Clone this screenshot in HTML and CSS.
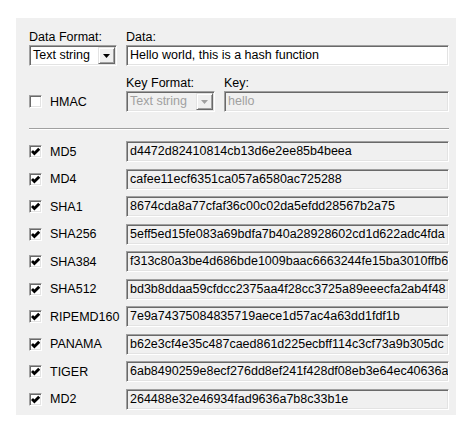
FILE: index.html
```html
<!DOCTYPE html>
<html>
<head>
<meta charset="utf-8">
<link rel="stylesheet" href="styles.css">
</head>
<body>
<div class="panel">
  <div class="top">
    <div class="col-fmt">
      <div class="lbl">Data Format:</div>
      <div class="combo">
        <span class="combo-text">Text string</span>
        <span class="combo-btn"><svg width="7" height="4" viewBox="0 0 7 4"><polygon points="0,0 7,0 3.5,4" fill="#000"/></svg></span>
      </div>
    </div>
    <div class="col-data">
      <div class="lbl">Data:</div>
      <div class="field white">Hello world, this is a hash function</div>
    </div>
  </div>
  <div class="keyrow">
    <div class="hmac"><span class="cb"></span><span class="cb-label">HMAC</span></div>
    <div class="col-kfmt">
      <div class="lbl">Key Format:</div>
      <div class="combo disabled">
        <span class="combo-text">Text string</span>
        <span class="combo-btn"><svg width="7" height="4" viewBox="0 0 7 4"><polygon points="0,0 7,0 3.5,4" fill="#a0a0a0"/></svg></span>
      </div>
    </div>
    <div class="col-key">
      <div class="lbl">Key:</div>
      <div class="field disabled">hello</div>
    </div>
  </div>
  <div class="sep"></div>
  <div class="hashes">
    <div class="hrow"><div class="hlabel"><span class="cb on"><svg width="9" height="9" viewBox="0 0 9 9"><polyline points="1,4 3.4,6.6 8.2,1.8" fill="none" stroke="#000" stroke-width="2.8"/></svg></span><span class="cb-label">MD5</span></div><div class="field ro">d4472d82410814cb13d6e2ee85b4beea</div></div>
    <div class="hrow"><div class="hlabel"><span class="cb on"><svg width="9" height="9" viewBox="0 0 9 9"><polyline points="1,4 3.4,6.6 8.2,1.8" fill="none" stroke="#000" stroke-width="2.8"/></svg></span><span class="cb-label">MD4</span></div><div class="field ro">cafee11ecf6351ca057a6580ac725288</div></div>
    <div class="hrow"><div class="hlabel"><span class="cb on"><svg width="9" height="9" viewBox="0 0 9 9"><polyline points="1,4 3.4,6.6 8.2,1.8" fill="none" stroke="#000" stroke-width="2.8"/></svg></span><span class="cb-label">SHA1</span></div><div class="field ro">8674cda8a77cfaf36c00c02da5efdd28567b2a75</div></div>
    <div class="hrow"><div class="hlabel"><span class="cb on"><svg width="9" height="9" viewBox="0 0 9 9"><polyline points="1,4 3.4,6.6 8.2,1.8" fill="none" stroke="#000" stroke-width="2.8"/></svg></span><span class="cb-label">SHA256</span></div><div class="field ro">5eff5ed15fe083a69bdfa7b40a28928602cd1d622adc4fda</div></div>
    <div class="hrow"><div class="hlabel"><span class="cb on"><svg width="9" height="9" viewBox="0 0 9 9"><polyline points="1,4 3.4,6.6 8.2,1.8" fill="none" stroke="#000" stroke-width="2.8"/></svg></span><span class="cb-label">SHA384</span></div><div class="field ro">f313c80a3be4d686bde1009baac6663244fe15ba3010ffb6</div></div>
    <div class="hrow"><div class="hlabel"><span class="cb on"><svg width="9" height="9" viewBox="0 0 9 9"><polyline points="1,4 3.4,6.6 8.2,1.8" fill="none" stroke="#000" stroke-width="2.8"/></svg></span><span class="cb-label">SHA512</span></div><div class="field ro">bd3b8ddaa59cfdcc2375aa4f28cc3725a89eeecfa2ab4f48</div></div>
    <div class="hrow"><div class="hlabel"><span class="cb on"><svg width="9" height="9" viewBox="0 0 9 9"><polyline points="1,4 3.4,6.6 8.2,1.8" fill="none" stroke="#000" stroke-width="2.8"/></svg></span><span class="cb-label">RIPEMD160</span></div><div class="field ro">7e9a74375084835719aece1d57ac4a63dd1fdf1b</div></div>
    <div class="hrow"><div class="hlabel"><span class="cb on"><svg width="9" height="9" viewBox="0 0 9 9"><polyline points="1,4 3.4,6.6 8.2,1.8" fill="none" stroke="#000" stroke-width="2.8"/></svg></span><span class="cb-label">PANAMA</span></div><div class="field ro">b62e3cf4e35c487caed861d225ecbff114c3cf73a9b305dc</div></div>
    <div class="hrow"><div class="hlabel"><span class="cb on"><svg width="9" height="9" viewBox="0 0 9 9"><polyline points="1,4 3.4,6.6 8.2,1.8" fill="none" stroke="#000" stroke-width="2.8"/></svg></span><span class="cb-label">TIGER</span></div><div class="field ro">6ab8490259e8ecf276dd8ef241f428df08eb3e64ec40636a</div></div>
    <div class="hrow"><div class="hlabel"><span class="cb on"><svg width="9" height="9" viewBox="0 0 9 9"><polyline points="1,4 3.4,6.6 8.2,1.8" fill="none" stroke="#000" stroke-width="2.8"/></svg></span><span class="cb-label">MD2</span></div><div class="field ro">264488e32e46934fad9636a7b8c33b1e</div></div>
  </div>
</div>
</body>
</html>
```

FILE: styles.css
```css
html, body {
  margin: 0;
  padding: 0;
  background: #ffffff;
}

body {
  font-family: "Liberation Sans", Arial, sans-serif;
  font-size: 12.5px;
  color: #000;
}

.panel {
  margin: 18px 0 0 16px;
  width: 440px;
  height: 397px;
  box-sizing: border-box;
  background: #f0f0f0;
  padding: 11px 7px 5.5px 13px;
}

.top, .keyrow {
  display: grid;
  grid-template-columns: 88px 89px 225px;
  column-gap: 9px;
}

.col-data {
  grid-column: 2 / 4;
}

.keyrow {
  margin-top: 9px;
}

.lbl {
  height: 16px;
  line-height: 16px;
  white-space: nowrap;
}

.combo, .field {
  box-sizing: border-box;
  height: 21px;
  border: 1px solid;
  border-color: #a0a0a0 #ffffff #ffffff #a0a0a0;
  box-shadow: inset 1px 1px 0 #696969, inset -1px -1px 0 #e3e3e3;
  padding: 1px;
  background: #f0f0f0;
}

.combo {
  display: flex;
  background: #ffffff;
}

.combo-text {
  flex: 1;
  line-height: 17px;
  padding-left: 2px;
  white-space: nowrap;
  overflow: hidden;
}

.combo-btn {
  box-sizing: border-box;
  width: 17px;
  height: 17px;
  background: #f0f0f0;
  border: 1px solid;
  border-color: #e3e3e3 #696969 #696969 #e3e3e3;
  box-shadow: inset 1px 1px 0 #ffffff, inset -1px -1px 0 #a0a0a0;
  display: flex;
  align-items: center;
  justify-content: center;
}

.combo.disabled {
  background: #f0f0f0;
  color: #a0a0a0;
}

.field {
  line-height: 17px;
  padding-left: 3px;
  white-space: nowrap;
  overflow: hidden;
}

.field.white {
  background: #ffffff;
}

.field.disabled {
  color: #a0a0a0;
}

.hmac {
  display: flex;
  align-items: center;
  padding-top: 16px;
  height: 37px;
  box-sizing: border-box;
}

.cb {
  box-sizing: border-box;
  width: 13px;
  height: 13px;
  flex: none;
  border: 1px solid;
  border-color: #a0a0a0 #ffffff #ffffff #a0a0a0;
  box-shadow: inset 1px 1px 0 #696969, inset -1px -1px 0 #e3e3e3;
  background: #ffffff;
  display: flex;
  align-items: center;
  justify-content: center;
}

.cb svg {
  display: block;
}

.cb-label {
  margin-left: 8px;
  white-space: nowrap;
}

.sep {
  margin-top: 16px;
  height: 0;
  border-top: 1px solid #a0a0a0;
  border-bottom: 1px solid #ffffff;
}

.hashes {
  margin-top: 11px;
  display: flex;
  flex-direction: column;
  gap: 6.5px;
}

.hrow {
  display: flex;
  height: 21px;
}

.hlabel {
  width: 97px;
  display: flex;
  align-items: center;
  flex: none;
}

.hrow .field {
  width: 323px;
}
```
